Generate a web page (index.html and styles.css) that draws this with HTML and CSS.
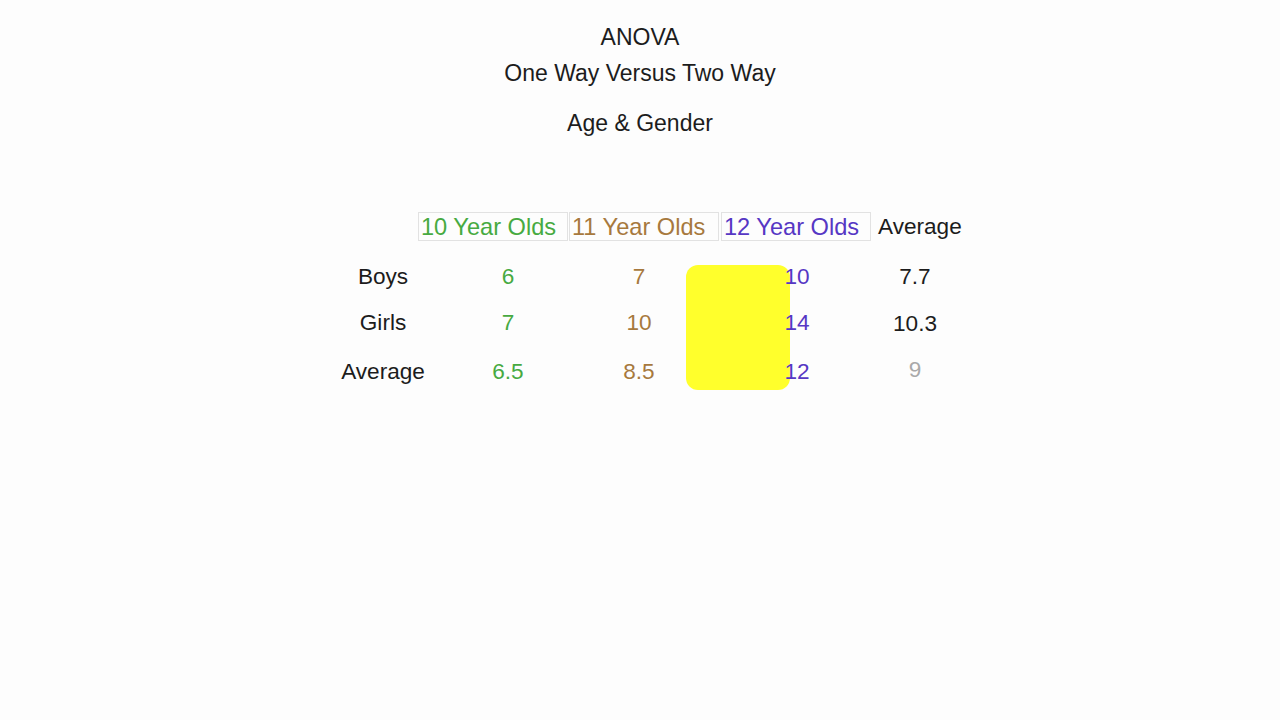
FILE: index.html
```html
<!DOCTYPE html>
<html lang="en">
<head>
  <meta charset="UTF-8">
  <meta name="viewport" content="width=device-width, initial-scale=1.0">
  <title>ANOVA - One Way Versus Two Way</title>
  <link rel="stylesheet" href="styles.css">
</head>
<body>
  <div class="slide">
    <!-- Titulos -->
    <div class="titles">
      <div class="title">ANOVA</div>
      <div class="title">One Way Versus Two Way</div>
      <div class="title subtitle">Age &amp; Gender</div>
    </div>

    <!-- Cabecalho da tabela -->
    <div class="head-row">
      <div class="head-cell green">10 Year Olds</div>
      <div class="head-cell brown">11 Year Olds</div>
      <div class="head-cell purple gap">12 Year Olds</div>
      <div class="head-cell plain">Average</div>
    </div>

    <!-- Linhas de dados -->
    <div class="rows">
      <!-- marcador amarelo atras da coluna -->
      <div class="highlight"></div>

      <div class="row">
        <div class="cell">Boys</div>
        <div class="cell green">6</div>
        <div class="cell brown">7</div>
        <div class="cell purple">10</div>
        <div class="cell dark">7.7</div>
      </div>
      <div class="row">
        <div class="cell">Girls</div>
        <div class="cell green">7</div>
        <div class="cell brown">10</div>
        <div class="cell purple">14</div>
        <div class="cell dark low">10.3</div>
      </div>
      <div class="row last">
        <div class="cell">Average</div>
        <div class="cell green">6.5</div>
        <div class="cell brown">8.5</div>
        <div class="cell purple">12</div>
        <div class="cell grey high">9</div>
      </div>
    </div>
  </div>
</body>
</html>
```

FILE: styles.css
```css
/* Slide simples com tabela centralizada */
body {
  margin: 0;
  background-color: #fdfdfd;
  font-family: "Liberation Sans", Arial, sans-serif;
  color: #1c1c1c;
}
.slide {
  width: 1280px;
  height: 720px;
  padding-top: 19px;
  box-sizing: border-box;
}
.titles {
  text-align: center;
}
.title {
  font-size: 23px;
  line-height: 36px;
}
.subtitle {
  margin-top: 14px;
}
.head-row {
  display: flex;
  margin-top: 71px;
  margin-left: 418px;
}
.head-cell {
  width: 150px;
  height: 29px;
  box-sizing: border-box;
  border: 1px solid #e2e2e2;
  padding-left: 2px;
  font-size: 23.6px;
  line-height: 29px;
  white-space: nowrap;
}
.head-cell.brown {
  margin-left: 1px;
}
.head-cell.gap {
  margin-left: 2px;
}
.head-cell.plain {
  width: 100px;
  border-color: transparent;
  padding-left: 6px;
  font-size: 22.6px;
  line-height: 27px;
}
.rows {
  position: relative;
  margin-top: 13px;
  margin-left: 333px;
  width: 640px;
}
.row {
  position: relative;
  display: grid;
  grid-template-columns: 125px 131px 157px 119px 100px;
  height: 46px;
  align-items: center;
}
.row.last {
  margin-top: 3px;
}
.cell {
  width: 100px;
  font-size: 22.6px;
  text-align: center;
}
.cell.purple {
  padding-left: 1px;
}
.low {
  margin-top: 2px;
}
.high {
  margin-top: -5px;
}
.green { color: #47aa41; }
.brown { color: #a7793d; }
.purple { color: #5637c4; }
.dark { color: #1c1c1c; }
.grey { color: #a9a9a9; }

/* retangulo amarelo que fica atras da coluna de 12 anos */
.highlight {
  position: absolute;
  left: 353px;
  top: 11px;
  width: 104px;
  height: 125px;
  background-color: #ffff2c;
  border-radius: 12px;
}
```
